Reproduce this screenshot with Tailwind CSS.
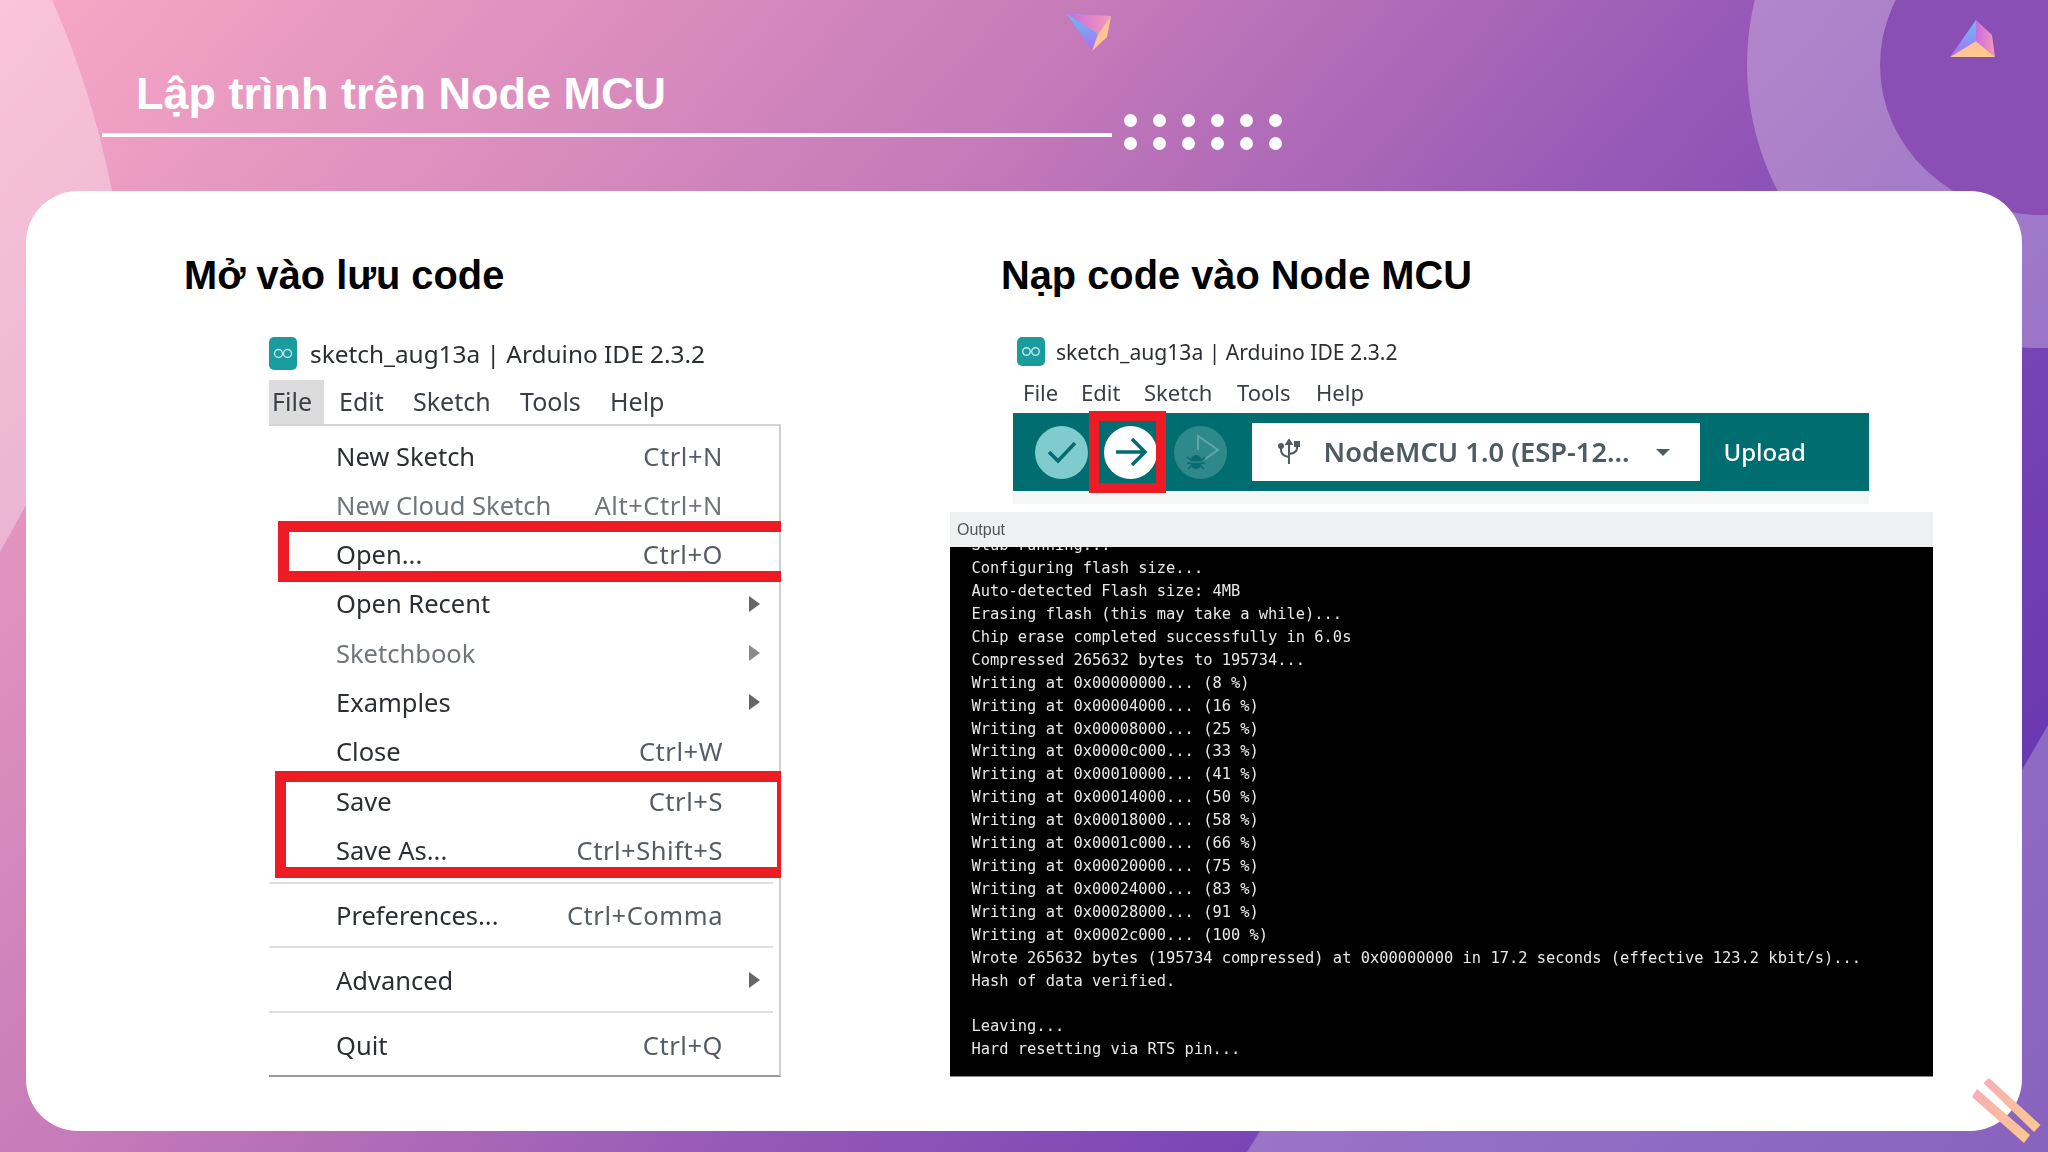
<!DOCTYPE html>
<html lang="vi">
<head>
  <meta charset="UTF-8">
  <meta name="viewport" content="width=device-width, initial-scale=1.0">
  <title>Lập trình trên Node MCU</title>
  <script src="https://cdn.jsdelivr.net/npm/@tailwindcss/browser@4"></script>
</head>
<body>
  <div class="relative w-[2048px] h-[1152px] overflow-hidden font-['Liberation_Sans',sans-serif] bg-[linear-gradient(132deg,#f9a8c4_0%,#c57ab9_36%,#9558b7_58%,#7a45b5_74%,#6a38b0_88%,#5f30a8_100%)]">

    <!-- background shapes -->
    <svg class="absolute inset-0" width="2048" height="1152" viewBox="0 0 2048 1152">
      <defs>
        <linearGradient id="logoBlue" x1="0" y1="0" x2="0" y2="1">
          <stop offset="0" stop-color="#5fc4f5"/>
          <stop offset="1" stop-color="#b06cf0"/>
        </linearGradient>
        <linearGradient id="logoPink" x1="0" y1="0" x2="1" y2="0">
          <stop offset="0" stop-color="#c86be0"/>
          <stop offset="1" stop-color="#f59ab8"/>
        </linearGradient>
        <linearGradient id="logoPeach" x1="0" y1="0" x2="1" y2="1">
          <stop offset="0" stop-color="#fdb7a0"/>
          <stop offset="1" stop-color="#fdd08a"/>
        </linearGradient>
      </defs>
      <path d="M0 0 L52 0 Q92 90 112 191 L115 450 L26 505 L0 552 Z" fill="#ffffff" fill-opacity="0.32"/>
      <ellipse cx="2040" cy="65" rx="293" ry="283" fill="#ffffff" fill-opacity="0.27"/>
      <ellipse cx="2040" cy="65" rx="160" ry="150" fill="#8a4fb4"/>
      <path d="M2048 725 L2022 770 L1400 1000 L1260 1131 L1247 1152 L2048 1152 Z" fill="#ffffff" fill-opacity="0.25"/>

      <!-- top logo -->
      <polygon points="1067,14 1111,16 1098,34 1092,51" fill="url(#logoBlue)"/>
      <polygon points="1067,14 1111,16 1098,34" fill="url(#logoPink)"/>
      <polygon points="1111,16 1107,37 1092,51 1098,34" fill="url(#logoPeach)"/>
      <!-- right logo -->
      <polygon points="1976,20 1950,57 1976,41" fill="url(#logoBlue)"/>
      <polygon points="1976,20 1992,35 1995,57 1976,41" fill="url(#logoPink)"/>
      <polygon points="1950,57 1976,41 1995,57" fill="url(#logoPeach)"/>
    </svg>

    <!-- header -->
    <div class="relative h-[191px] pt-[70px]">
      <h1 class="h-[44px] pl-[136px] text-[45px] leading-[48px] font-bold text-white">Lập trình trên Node MCU</h1>
      <div class="flex items-start ml-[102px]">
        <div class="w-[1010px] h-[4px] mt-[19px] bg-white"></div>
        <div class="grid grid-cols-6 gap-x-[16px] gap-y-[9.5px] ml-[11.5px]">
          <span class="w-[13px] h-[13px] rounded-full bg-white"></span>
          <span class="w-[13px] h-[13px] rounded-full bg-white"></span>
          <span class="w-[13px] h-[13px] rounded-full bg-white"></span>
          <span class="w-[13px] h-[13px] rounded-full bg-white"></span>
          <span class="w-[13px] h-[13px] rounded-full bg-white"></span>
          <span class="w-[13px] h-[13px] rounded-full bg-white"></span>
          <span class="w-[13px] h-[13px] rounded-full bg-white"></span>
          <span class="w-[13px] h-[13px] rounded-full bg-white"></span>
          <span class="w-[13px] h-[13px] rounded-full bg-white"></span>
          <span class="w-[13px] h-[13px] rounded-full bg-white"></span>
          <span class="w-[13px] h-[13px] rounded-full bg-white"></span>
          <span class="w-[13px] h-[13px] rounded-full bg-white"></span>
        </div>
      </div>
    </div>

    <!-- white card -->
    <div class="relative flex ml-[26px] w-[1996px] h-[940px] rounded-[52px] bg-white">

      <!-- left column -->
      <div class="w-[924px] pl-[158px] pt-[60px]">
        <h2 class="h-[48px] text-[39.8px] leading-[48px] font-bold text-black">Mở vào lưu code</h2>
        <div class="w-[512px] ml-[85px] mt-[38px] font-['Noto_Sans',sans-serif] text-[#2b2f33] blur-[0.5px]">
          <div class="flex items-center h-[33px] gap-[13px] text-[24.4px]">
            <svg width="28" height="33" viewBox="0 0 28 33">
              <rect width="28" height="33" rx="5" fill="#1a9c9e"/>
              <circle cx="9.5" cy="16.5" r="4" fill="none" stroke="#bfe6e6" stroke-width="1.4"/>
              <circle cx="18.5" cy="16.5" r="4" fill="none" stroke="#bfe6e6" stroke-width="1.4"/>
            </svg>
            <span class="pt-[2px]">sketch_aug13a | Arduino IDE 2.3.2</span>
          </div>
          <div class="flex items-center h-[44px] mt-[10px] text-[25px] text-[#3a3f45]">
            <span class="flex items-center w-[55px] h-[44px] pl-[3px] bg-[#dcdcdc]">File</span>
            <span class="w-[74px] ml-[15px]">Edit</span>
            <span class="w-[107px]">Sketch</span>
            <span class="w-[90px]">Tools</span>
            <span>Help</span>
          </div>

          <!-- file menu -->
          <div class="relative h-[653px] pt-[5px] text-[25.5px] border-t-2 border-r-2 border-b-2 border-t-[#d4d4d4] border-r-[#cfcfcf] border-b-[#9a9a9a]">
            <div class="flex items-center justify-between h-[49.3px] pl-[67px] pr-[56px]"><span>New Sketch</span><span class="tracking-[0.55px] text-[#555c63]">Ctrl+N</span></div>
            <div class="flex items-center justify-between h-[49.3px] pl-[67px] pr-[56px] text-[#70757a]"><span>New Cloud Sketch</span><span class="tracking-[0.55px]">Alt+Ctrl+N</span></div>
            <div class="flex items-center justify-between h-[49.3px] pl-[67px] pr-[56px]"><span>Open...</span><span class="tracking-[0.55px] text-[#555c63]">Ctrl+O</span></div>
            <div class="flex items-center justify-between h-[49.3px] pl-[67px] pr-[19px]"><span>Open Recent</span><span class="w-0 h-0 border-y-[8px] border-l-[11px] border-y-transparent border-l-[#666666]"></span></div>
            <div class="flex items-center justify-between h-[49.3px] pl-[67px] pr-[19px] text-[#70757a]"><span>Sketchbook</span><span class="w-0 h-0 border-y-[8px] border-l-[11px] border-y-transparent border-l-[#8a8a8a]"></span></div>
            <div class="flex items-center justify-between h-[49.3px] pl-[67px] pr-[19px]"><span>Examples</span><span class="w-0 h-0 border-y-[8px] border-l-[11px] border-y-transparent border-l-[#666666]"></span></div>
            <div class="flex items-center justify-between h-[49.3px] pl-[67px] pr-[56px]"><span>Close</span><span class="tracking-[0.55px] text-[#555c63]">Ctrl+W</span></div>
            <div class="flex items-center justify-between h-[49.3px] pl-[67px] pr-[56px]"><span>Save</span><span class="tracking-[0.55px] text-[#555c63]">Ctrl+S</span></div>
            <div class="flex items-center justify-between h-[49.3px] pl-[67px] pr-[56px]"><span>Save As...</span><span class="tracking-[0.55px] text-[#555c63]">Ctrl+Shift+S</span></div>
            <div class="h-[2px] mt-[7.3px] mr-[6px] bg-[#dedede]"></div>
            <div class="flex items-center justify-between h-[49px] mt-[7px] pl-[67px] pr-[56px]"><span>Preferences...</span><span class="tracking-[0.55px] text-[#555c63]">Ctrl+Comma</span></div>
            <div class="h-[2px] mt-[6px] mr-[6px] bg-[#dedede]"></div>
            <div class="flex items-center justify-between h-[49px] mt-[8px] pl-[67px] pr-[19px]"><span>Advanced</span><span class="w-0 h-0 border-y-[8px] border-l-[11px] border-y-transparent border-l-[#666666]"></span></div>
            <div class="h-[2px] mt-[6px] mr-[6px] bg-[#dedede]"></div>
            <div class="flex items-center justify-between h-[49px] mt-[8px] pl-[67px] pr-[56px]"><span>Quit</span><span class="tracking-[0.55px] text-[#555c63]">Ctrl+Q</span></div>

            <!-- red highlights -->
            <div class="absolute left-[9px] top-[95px] w-[503px] h-[61px] border-[11px] border-r-0 border-[#ed1c24]"></div>
            <div class="absolute left-[6px] top-[345px] w-[506px] h-[107px] border-[11px] border-r-[4px] border-[#ed1c24]"></div>
          </div>
        </div>
      </div>

      <!-- right column -->
      <div class="w-[983px] pt-[60px]">
        <h2 class="h-[48px] ml-[51px] text-[39.8px] leading-[48px] font-bold text-black">Nạp code vào Node MCU</h2>
        <div class="mt-[38px] ml-[63px] w-[856px] font-['Noto_Sans',sans-serif] text-[#2b2f33] blur-[0.5px]">
          <div class="flex items-center h-[29px] pl-[4px] gap-[11px] text-[21.1px]">
            <svg width="28" height="29" viewBox="0 0 28 29">
              <rect width="28" height="29" rx="5" fill="#1a9c9e"/>
              <circle cx="9.5" cy="14.5" r="3.8" fill="none" stroke="#bfe6e6" stroke-width="1.4"/>
              <circle cx="18.5" cy="14.5" r="3.8" fill="none" stroke="#bfe6e6" stroke-width="1.4"/>
            </svg>
            <span>sketch_aug13a | Arduino IDE 2.3.2</span>
          </div>
          <div class="flex items-center h-[47px] pl-[10px] pt-[6px] text-[22px] text-[#3a3f45]">
            <span class="w-[58px]">File</span>
            <span class="w-[63px]">Edit</span>
            <span class="w-[93px]">Sketch</span>
            <span class="w-[79px]">Tools</span>
            <span>Help</span>
          </div>

          <!-- toolbar -->
          <div class="relative flex items-center h-[78px] pl-[22px] bg-[#006d70]">
            <span class="flex items-center justify-center w-[53px] h-[53px] rounded-full bg-[#7fcbcd]">
              <svg width="34" height="28" viewBox="0 0 34 28"><path d="M4 14 L13 23 L30 5" fill="none" stroke="#006d70" stroke-width="3.5"/></svg>
            </span>
            <span class="flex items-center justify-center w-[53px] h-[53px] ml-[16px] rounded-full bg-white">
              <svg width="34" height="30" viewBox="0 0 34 30"><path d="M2 15 H31 M18 2 L31 15 L18 28" fill="none" stroke="#006d70" stroke-width="3.5"/></svg>
            </span>
            <span class="flex items-center justify-center w-[53px] h-[53px] ml-[17px] rounded-full bg-[#2f888a]">
              <svg width="40" height="44" viewBox="0 0 40 44">
                <path d="M17 20 V6 L37 20 L24 29" fill="none" stroke="#5fa8a8" stroke-width="2"/>
                <ellipse cx="15" cy="32" rx="6" ry="7" fill="#0b6a6d"/>
                <path d="M6 27 L10 30 M6 33 H10 M7 39 L10 36 M24 27 L20 30 M24 33 H20 M23 39 L20 36" stroke="#0b6a6d" stroke-width="1.5"/>
                <path d="M9 32 H21" stroke="#2f888a" stroke-width="1.5"/>
              </svg>
            </span>
            <div class="flex items-center w-[448px] h-[58px] ml-[24.5px] bg-white text-[#4e5b61]">
              <svg class="ml-[26px]" width="22" height="26" viewBox="0 0 22 26" fill="none" stroke="#4e5b61" stroke-width="2">
                <path d="M11 3 V25 M11 18 Q3 17 3 11 V8 M11 15 Q19 14 19 9 V6"/>
                <path d="M8.5 5 L11 1 L13.5 5 Z" fill="#4e5b61"/>
                <circle cx="3" cy="7" r="2" fill="#4e5b61"/>
                <rect x="17" y="3" width="4" height="4" fill="#4e5b61"/>
              </svg>
              <span class="ml-[24px] text-[27.3px] font-semibold whitespace-nowrap">NodeMCU 1.0 (ESP-12...</span>
              <span class="ml-[26px] w-0 h-0 border-x-[7px] border-t-[7px] border-x-transparent border-t-[#4e5b61]"></span>
            </div>
            <span class="ml-[24px] text-[24px] font-medium text-white">Upload</span>

            <!-- red highlight -->
            <div class="absolute left-[76px] -top-[2px] w-[77px] h-[82px] border-[10px] border-[#ed1c24]"></div>
          </div>
          <div class="h-[13px] bg-[#f5f6f6]"></div>
        </div>

        <!-- output panel -->
        <div class="mt-[8px] blur-[0.4px]">
          <div class="flex items-center h-[35px] pl-[7px] bg-[#eef0f1] text-[16px] text-[#555555]">Output</div>
          <div class="h-[530px] overflow-hidden bg-black border-b border-[#888888]">
            <pre class="-mt-[12.7px] pl-[21.5px] font-['DejaVu_Sans_Mono',monospace] text-[15.4px] leading-[22.9px] text-[#e8e8e8]">Stub running...
Configuring flash size...
Auto-detected Flash size: 4MB
Erasing flash (this may take a while)...
Chip erase completed successfully in 6.0s
Compressed 265632 bytes to 195734...
Writing at 0x00000000... (8 %)
Writing at 0x00004000... (16 %)
Writing at 0x00008000... (25 %)
Writing at 0x0000c000... (33 %)
Writing at 0x00010000... (41 %)
Writing at 0x00014000... (50 %)
Writing at 0x00018000... (58 %)
Writing at 0x0001c000... (66 %)
Writing at 0x00020000... (75 %)
Writing at 0x00024000... (83 %)
Writing at 0x00028000... (91 %)
Writing at 0x0002c000... (100 %)
Wrote 265632 bytes (195734 compressed) at 0x00000000 in 17.2 seconds (effective 123.2 kbit/s)...
Hash of data verified.

Leaving...
Hard resetting via RTS pin...</pre>
          </div>
        </div>
      </div>
    </div>

    <!-- corner stripes -->
    <svg class="absolute left-[1960px] top-[1070px]" width="88" height="82" viewBox="1960 1070 88 82">
      <defs>
        <linearGradient id="stripe" x1="0" y1="0" x2="1" y2="1">
          <stop offset="0" stop-color="#f5aeb8"/>
          <stop offset="1" stop-color="#fdc98c"/>
        </linearGradient>
      </defs>
      <polygon points="1983.5,1083 1989,1078 2040.5,1125 2034,1132" fill="url(#stripe)"/>
      <polygon points="1972,1097 1977,1089 2030,1135 2024,1143" fill="url(#stripe)"/>
    </svg>
  </div>
</body>
</html>
